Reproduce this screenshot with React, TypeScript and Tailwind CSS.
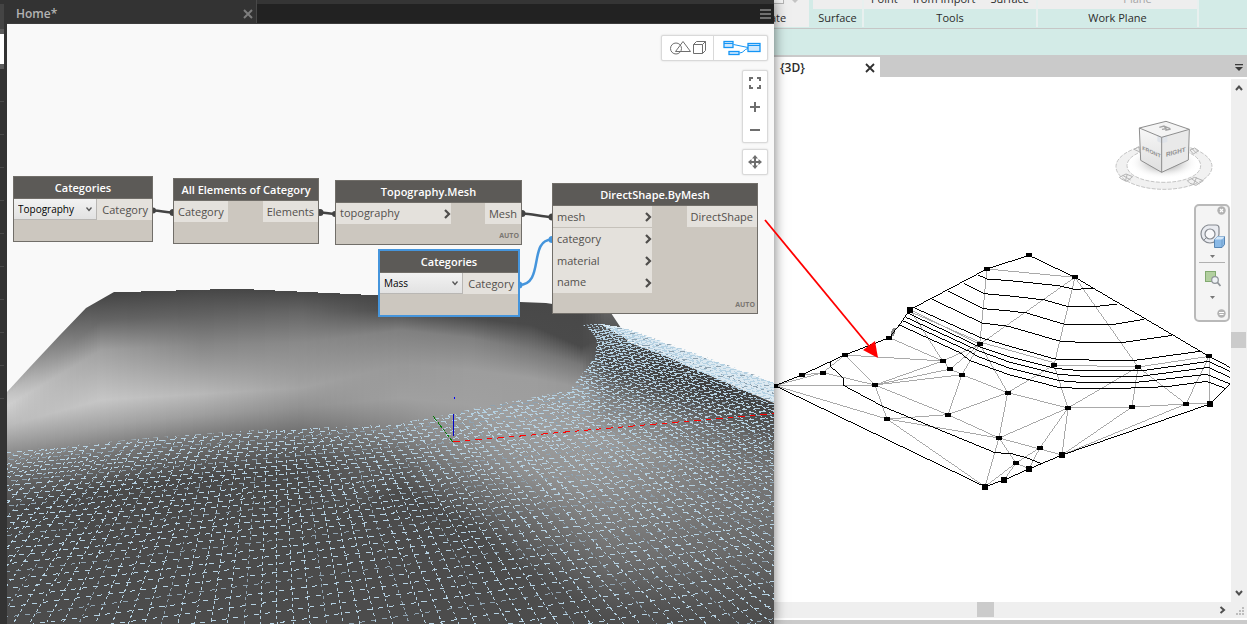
import React from "react";

type Point = [number, number];

const SANS = "font-['Open_Sans','Noto_Sans',sans-serif]";

/* ---------- Terrain preview ---------- */

type ShadeColumn = { x: number; stops: Point[] };

// Each column lists [y, grey level] pairs from the skyline down to the foreground.
const SHADES: ShadeColumn[] = [
  { x: 7, stops: [[385, 175], [395, 198], [405, 208], [425, 187], [450, 145], [475, 105], [510, 74], [560, 75], [624, 76]] },
  { x: 100, stops: [[295, 70], [320, 100], [350, 160], [400, 198], [425, 165], [450, 122], [490, 74], [550, 75], [624, 76]] },
  { x: 200, stops: [[289, 70], [315, 98], [345, 134], [394, 184], [415, 158], [440, 115], [478, 74], [550, 75], [624, 76]] },
  { x: 300, stops: [[290, 70], [312, 102], [343, 138], [388, 163], [407, 145], [432, 113], [468, 76], [550, 75], [624, 76]] },
  { x: 400, stops: [[296, 70], [310, 75], [330, 128], [365, 152], [398, 160], [425, 138], [455, 108], [490, 76], [624, 76]] },
  { x: 470, stops: [[300, 72], [318, 76], [338, 128], [370, 157], [405, 160], [450, 140], [487, 112], [530, 76], [624, 76]] },
  { x: 530, stops: [[302, 72], [325, 74], [350, 120], [378, 157], [425, 159], [475, 143], [520, 108], [575, 78], [624, 76]] },
  { x: 580, stops: [[302, 72], [347, 74], [365, 120], [388, 152], [435, 158], [480, 148], [540, 112], [600, 80], [624, 76]] },
  { x: 605, stops: [[310, 100], [335, 80], [362, 72], [400, 130], [440, 155], [480, 145], [550, 115], [605, 84], [624, 76]] },
  { x: 650, stops: [[350, 66], [372, 68], [390, 85], [415, 130], [450, 145], [490, 135], [560, 110], [610, 82], [624, 78]] },
  { x: 710, stops: [[375, 64], [392, 66], [405, 80], [430, 115], [460, 125], [500, 122], [560, 105], [605, 85], [624, 78]] },
  { x: 776, stops: [[403, 66], [410, 68], [420, 75], [445, 100], [475, 115], [515, 112], [560, 98], [600, 82], [624, 76]] },
];

const STRIP = 3;

function shadeAt(x: number): Point[] {
  let i = 0;
  while (i < SHADES.length - 2 && SHADES[i + 1].x < x) i++;
  const a = SHADES[i];
  const b = SHADES[i + 1];
  const t = Math.max(0, Math.min(1, (x - a.x) / (b.x - a.x)));
  return a.stops.map((s, n) => [
    s[0] + (b.stops[n][0] - s[0]) * t,
    s[1] + (b.stops[n][1] - s[1]) * t,
  ]);
}

const strips = Array.from({ length: 256 }, (_, i) => 7 + i * STRIP);

const TERRAIN =
  "7,392 30,367 60,335 86,308 114,292 141,292 141,291 176,291 176,290 210,290 210,289 254,289 254,290 275,290 275,291 297,291 297,292 318,292 318,293 340,293 340,294 361,294 361,295 380,295 520,302 546,303 611,313 621,328 628,342 663,355 713,377 774,403 774,624 7,624";

const GRID_REGION =
  "7,452 67,446 150,438 230,432 277,429 340,427 393,424 440,416 477,408 530,398 570,390 583,373 595,357 597,340 592,332 583,325 605,323 620,326 774,382 774,624 7,624";

const HORIZON = 210;
const VANISH_X = 275;
const FAR_X = 3104;

const depthLines = Array.from({ length: 128 }, (_, i) => i - 74).map((k) => {
  const slope = 0.763 + 0.0399 * k;
  return {
    major: (((k + 1) % 5) + 5) % 5 === 0,
    x1: VANISH_X + slope * 100,
    y1: HORIZON + 100,
    x2: VANISH_X + slope * 420,
    y2: HORIZON + 420,
  };
});

const crossLines = Array.from({ length: 92 }, (_, i) => i - 50)
  .map((j) => ({ j, inv: 1 / 232 - j * 0.000072 }))
  .filter((l) => l.inv > 0.0015)
  .map(({ j, inv }) => {
    const depth = 1 / inv;
    const at = (x: number) => HORIZON + (depth * (FAR_X - x)) / (FAR_X - 453);
    return { major: j % 5 === 0, y1: at(0), y2: at(780), shift: (Math.abs(j) * 7) % 11 };
  });

function TerrainScene() {
  return (
    <svg className="absolute inset-0 h-full w-full" viewBox="7 24 767 600" aria-hidden="true">
      <defs>
        <clipPath id="terrain">
          <polygon points={TERRAIN} />
        </clipPath>
        <clipPath id="grid-region">
          <polygon points={GRID_REGION} />
        </clipPath>
        {strips.map((x, i) => (
          <linearGradient key={x} id={`shade-${i}`} gradientUnits="userSpaceOnUse" x1="0" x2="0" y1="280" y2="624">
            {shadeAt(x).map(([y, v], n) => {
              const c = Math.round(v);
              return <stop key={n} offset={(y - 280) / 344} stopColor={`rgb(${c},${c},${c})`} />;
            })}
          </linearGradient>
        ))}
      </defs>
      <g clipPath="url(#terrain)" shapeRendering="crispEdges">
        {strips.map((x, i) => (
          <rect key={x} x={x} y="280" width={STRIP} height="344" fill={`url(#shade-${i})`} />
        ))}
      </g>
      <g clipPath="url(#grid-region)" shapeRendering="crispEdges" strokeWidth="1">
        <path d="M600 324L620 327L774 383V402L713 377L663 355L628 340Z" fill="#dce9f1" />
        {depthLines.map((l, i) => (
          <line key={i} x1={l.x1} y1={l.y1} x2={l.x2} y2={l.y2} stroke={l.major ? "#8ea2b0" : "#b5d1e2"} strokeDasharray="3 3" />
        ))}
        {crossLines.map((l, i) => (
          <line key={i} x1="0" y1={l.y1} x2="780" y2={l.y2} stroke={l.major ? "#8ea2b0" : "#b5d1e2"} strokeDasharray="5 6" strokeDashoffset={l.shift} />
        ))}
      </g>
      <g shapeRendering="crispEdges" fill="none">
        <path d="M453 442L774 413.500" stroke="#ff0000" strokeDasharray="7 5 5 5" />
        <path d="M433 416L453 442" stroke="#067a06" strokeDasharray="3 1" />
        <path d="M453.500 414V436" stroke="#0000c8" />
        <path d="M454.500 397V399" stroke="#0000ff" />
      </g>
    </svg>
  );
}

/* ---------- Graph nodes ---------- */

function Chevron() {
  return (
    <svg width="7" height="10" viewBox="0 0 7 10" aria-hidden="true">
      <path d="M1 1L5 5L1 9" fill="none" stroke="#4f4d4b" strokeWidth="2.200" />
    </svg>
  );
}

function InPort({ label, className = "", chevron = false }: { label: string; className?: string; chevron?: boolean }) {
  return (
    <div className={`flex items-center justify-between bg-[#e4e1dc] pl-1 ${className}`}>
      <span>{label}</span>
      {chevron && <Chevron />}
    </div>
  );
}

function OutPort({ label }: { label: string }) {
  return <div className="ml-auto flex h-[21px] items-center bg-[#e4e1dc] px-1 pt-px">{label}</div>;
}

function Node({
  title,
  place,
  selected = false,
  auto = false,
  children,
}: {
  title: string;
  place: string;
  selected?: boolean;
  auto?: boolean;
  children: React.ReactNode;
}) {
  return (
    <section
      className={`absolute flex flex-col bg-[#ccc7bf] text-[11px] text-[#53504d] ${
        selected ? "border-2 border-[#4595dc]" : "border border-[#716e69]"
      } ${place}`}
    >
      <h2 className="flex h-[22px] shrink-0 items-center justify-center border-b border-[#716e69] bg-[#5c5a57] pt-[2px] text-[11px] font-semibold text-white">
        {title}
      </h2>
      <div className="flex items-start">{children}</div>
      {auto && <span className="mt-auto pr-[2px] pb-[3px] text-right text-[7px] leading-[10px] font-bold text-[#7a7671]">AUTO</span>}
    </section>
  );
}

function CategorySelect({ value }: { value: string }) {
  return (
    <div className="relative h-[21px] w-[83px] border-r border-b border-[#b9b7b4] bg-gradient-to-b from-[#f2f2f2] to-[#e2e2e2]">
      <select
        aria-label="Category"
        defaultValue={value}
        className="block h-full w-full appearance-none bg-transparent pl-1 text-[10px] leading-[18px] text-black outline-none"
      >
        <option>{value}</option>
      </select>
      <svg className="pointer-events-none absolute top-2 right-1" width="6" height="5" viewBox="0 0 6 5" aria-hidden="true">
        <path d="M.5 .5L3 3.500L5.500 .5" fill="none" stroke="#555" strokeWidth="1.300" />
      </svg>
    </div>
  );
}

function Connectors() {
  return (
    <svg className="absolute inset-0 h-full w-full" viewBox="7 24 767 600" aria-hidden="true">
      <g fill="none" stroke="#434343" strokeWidth="2.500">
        <path d="M154 210.500C160 210.500 166 212.500 173 212.500" />
        <path d="M320 212.500C326 212.500 330 214 335 214" />
        <path d="M522 213.500C532 213.500 542 217 552 217" />
        <path d="M519 285C545 285 528 239.500 552 239.500" stroke="#4595dc" />
      </g>
      <g fill="#434343">
        <circle cx="153" cy="210.500" r="3" />
        <circle cx="173" cy="212.500" r="3.500" />
        <circle cx="320" cy="212.500" r="3.500" />
        <circle cx="335" cy="214" r="3" />
        <circle cx="522" cy="213.500" r="3.500" />
        <circle cx="552" cy="217" r="3.500" />
        <circle cx="519" cy="285" r="3.500" fill="#4595dc" />
        <circle cx="552" cy="239.500" r="3.500" fill="#4595dc" />
      </g>
    </svg>
  );
}

function Graph() {
  return (
    <>
      <Connectors />
      <Node title="Categories" place="top-[152px] left-[6px] h-[66px] w-[140px]">
        <CategorySelect value="Topography" />
        <div className="flex h-[21px] flex-1 items-center justify-end bg-[#e4e1dc] pt-px pr-1">Category</div>
      </Node>
      <Node title="All Elements of Category" place="top-[154px] left-[166px] h-[66px] w-[146px]">
        <InPort label="Category" className="h-[21px] w-[54px] pt-px" />
        <OutPort label="Elements" />
      </Node>
      <Node title="Topography.Mesh" place="top-[156px] left-[328px] h-[65px] w-[187px]" auto>
        <InPort label="topography" className="h-[21px] w-[115px]" chevron />
        <OutPort label="Mesh" />
      </Node>
      <Node title="Categories" place="top-[225px] left-[371px] h-[68px] w-[142px]" selected>
        <CategorySelect value="Mass" />
        <div className="flex h-[21px] flex-1 items-center justify-end bg-[#e4e1dc] pt-px pr-1">Category</div>
      </Node>
      <Node title="DirectShape.ByMesh" place="top-[159px] left-[545px] h-[131px] w-[206px]" auto>
        <div className="flex w-[99px] flex-col">
          <InPort label="mesh" className="h-[22px] border-b border-[#c5c1ba] pt-px" chevron />
          <InPort label="category" className="h-[22px]" chevron />
          <InPort label="material" className="h-[22px]" chevron />
          <InPort label="name" className="h-[21px]" chevron />
        </div>
        <OutPort label="DirectShape" />
      </Node>
    </>
  );
}

const CARD = "rounded-[2px] border border-[#d9d9d9] bg-white shadow-[0_0_2px_rgba(0,0,0,0.15)]";

function ViewControls() {
  return (
    <div className="absolute top-[11px] right-[6px] flex flex-col items-end">
      <div className={`flex h-[26px] w-[107px] ${CARD}`}>
        <button aria-label="3D preview" className="flex flex-1 items-center justify-center border-r border-[#d9d9d9]">
          <svg width="38" height="16" viewBox="0 0 38 16" fill="none" stroke="#6e6e6e">
            <circle cx="7" cy="8.500" r="5.500" />
            <path d="M14 1.500L21.500 11.500H6.500Z" />
            <path d="M24.500 4.500H33.500V13.500H24.500ZM24.500 4.500L27.500 1.500H36.500V10.500L33.500 13.500M33.500 4.500L36.500 1.500" />
          </svg>
        </button>
        <button aria-label="Graph view" className="flex flex-1 items-center justify-center pl-[2px]">
          <svg width="38" height="16" viewBox="0 0 38 16" fill="none" stroke="#1495f5">
            <path d="M10.500 4.500L25 7.500M16.500 13C21 13 21 9 25 8.500" />
            <rect x="1" y="1.500" width="9" height="6" fill="#cfe8fd" strokeWidth="1.300" />
            <rect x="25" y="3.500" width="12" height="8" fill="#cfe8fd" strokeWidth="1.300" />
            <rect x="6" y="11.500" width="10" height="3" fill="#cfe8fd" strokeWidth="1.300" />
            <path d="M1 3.500H10M25 5.500H37" strokeWidth="1" />
          </svg>
        </button>
      </div>
      <div className={`mt-[9px] flex h-[73px] w-[26px] flex-col ${CARD}`}>
        <button aria-label="Fit to screen" className="flex flex-1 items-center justify-center">
          <svg width="12" height="12" viewBox="0 0 12 12" fill="none" stroke="#6e6e6e" strokeWidth="2">
            <path d="M1 4V1H4M8 1H11V4M11 8V11H8M4 11H1V8" />
          </svg>
        </button>
        <button aria-label="Zoom in" className="flex flex-1 items-center justify-center">
          <svg width="10" height="10" viewBox="0 0 10 10" stroke="#6e6e6e" strokeWidth="2">
            <path d="M0 5H10M5 0V10" />
          </svg>
        </button>
        <button aria-label="Zoom out" className="flex flex-1 items-center justify-center">
          <svg width="10" height="10" viewBox="0 0 10 10" stroke="#6e6e6e" strokeWidth="2">
            <path d="M0 5H10" />
          </svg>
        </button>
      </div>
      <button aria-label="Pan" className={`mt-[6px] flex h-[26px] w-[26px] items-center justify-center ${CARD}`}>
        <svg width="14" height="14" viewBox="0 0 14 14">
          <path d="M2 7H12M7 2V12" stroke="#6e6e6e" strokeWidth="2" />
          <path d="M7 0L10 3.500H4ZM7 14L10 10.500H4ZM0 7L3.500 4V10ZM14 7L10.500 4V10Z" fill="#6e6e6e" />
        </svg>
      </button>
    </div>
  );
}

function LibraryStrip() {
  return (
    <div className="flex w-[7px] shrink-0 flex-col bg-[#333333] pt-1 pr-[3px]">
      <div className="h-[25px] shrink-0 bg-[#444444]" />
      <div className="h-10 shrink-0 border-y-[5px] border-[#5c5c5c] bg-white" />
      {Array.from({ length: 10 }, (_, i) => (
        <div key={i} className="h-[33px] shrink-0 border-b border-[#4a4a4a]" />
      ))}
    </div>
  );
}

function GraphWindow() {
  return (
    <div className="relative z-10 flex min-w-0 flex-[774_1_0%] bg-[#333333] shadow-[0_0_12px_rgba(0,0,0,0.55)]">
      <LibraryStrip />
      <div className="flex min-w-0 flex-1 flex-col">
        <header className="flex h-6 shrink-0 items-stretch border-b border-[#3c3c3c] bg-[#222222]">
          <div className="flex w-[250px] items-center justify-between border-r border-[#484848] bg-[#333333] pt-[5px] pr-[3px] pl-[9px]">
            <span className="text-[12px] leading-4 font-semibold text-[#b4b4b4]">Home*</span>
            <button aria-label="Close Home" className="flex">
              <svg width="10" height="10" viewBox="0 0 10 10" stroke="#7d7d7d" strokeWidth="2">
                <path d="M1 1L9 9M9 1L1 9" />
              </svg>
            </button>
          </div>
          <div className="flex flex-1 items-center justify-end border-t-[4px] border-[#353535] pr-[3px]">
            <button aria-label="Menu" className="flex">
              <svg width="11" height="10" viewBox="0 0 11 10" stroke="#6f6f6f" strokeWidth="2">
                <path d="M0 1H11M0 5H11M0 9H11" />
              </svg>
            </button>
          </div>
        </header>
        <main className="relative flex-1 overflow-hidden bg-[#f9f9f9]">
          <TerrainScene />
          <Graph />
          <ViewControls />
        </main>
      </div>
    </div>
  );
}

/* ---------- 3D view window ---------- */

// Vertices of the triangulated surface, on a grid three times finer than the page.
const V: Record<string, Point> = {
  A: [15, 437], b: [95, 405], c: [159, 398], d: [224, 345], e: [358, 293], f: [420, 209], g: [651, 87], h: [777, 46],
  i: [915, 112], j: [1317, 349], k: [1320, 492], l: [876, 645], m: [777, 687], n: [702, 720], o: [645, 740], p: [315, 435],
  q: [351, 537], r: [518, 363], s: [541, 387], t: [576, 404], u: [534, 524], v: [629, 313], w: [713, 458], x: [687, 594],
  y: [852, 375], z: [1104, 381], B: [894, 504], C: [1086, 501], D: [1248, 492], E: [810, 623], F: [738, 669],
};

const EDGES =
  "Ap Aq Ac bc cd cp dp dr er fr fv gv gi vi pr ps pt pq pu qu qx qo tu tw ux wx xo xl xB xF vr vs vt vw rs st wy wB yi iz yz zj yB zB zC zD jD jk BC CD Dk Cl Dl Bl BE EF Em Fm Fo Fn uw".split(" ");

const CONTOURS = [
  "182,365 183,380 220,415 222,437 340,500 675,638 725,641 775,655 812,670",
  "625,105 650,117 720,122 865,137 915,148 970,145",
  "582,130 642,161 720,168 825,180 890,199 995,198 1040,192",
  "533,153 640,206 720,213 770,219 880,252 1025,254 1122,238",
  "487,178 636,249 715,259 868,303 930,307 1060,307 1207,286",
  "432,203 632,293 720,319 855,357 990,361 1095,361 1290,334",
  "415,220 627,320 720,351 855,385 930,392 1110,393 1317,364 1380,395",
  "408,232 625,332 720,367 860,402 940,409 1110,409 1317,382 1380,413",
  "400,243 600,335 620,348 720,385 870,422 940,428 1110,426 1310,403 1380,432",
  "388,255 570,338 600,362 720,405 870,443 940,445 1090,444 1190,440 1310,424 1368,446",
];

const OUTER = ["f", "k", "l", "m", "n", "o"];

function SurfaceScene() {
  return (
    <svg className="absolute inset-0 h-full w-full" viewBox="774 77 457 525" aria-hidden="true">
      <defs>
        <radialGradient id="cube-shadow">
          <stop offset="0.3" stopColor="#b5b5b5" />
          <stop offset="1" stopColor="#ffffff" stopOpacity="0" />
        </radialGradient>
        <linearGradient id="cube-front" x1="0" y1="0" x2="0" y2="1">
          <stop offset="0" stopColor="#f7f7f7" />
          <stop offset="1" stopColor="#dedede" />
        </linearGradient>
      </defs>
      <g transform="translate(770 240) scale(0.333333)" fill="none" strokeWidth="3" shapeRendering="crispEdges">
        <path d="M372 290L362 283L366 266L378 264Z" fill="#888" />
        <path d="M420 215L629 306L852 368" stroke="#a9a9a9" />
        {EDGES.map((e) => (
          <line key={e} x1={V[e[0]][0]} y1={V[e[0]][1]} x2={V[e[1]][0]} y2={V[e[1]][1]} stroke="#a9a9a9" />
        ))}
        {CONTOURS.map((c) => (
          <polyline key={c} points={c} stroke="#000" />
        ))}
        <path
          d="M1380 382L1317 349L915 112L777 46L651 87L420 209L388 255L358 293L224 345L95 405L15 437L645 740L702 720L777 687L876 645L1320 492L1380 432"
          stroke="#000"
        />
        {Object.entries(V).map(([name, [x, y]]) => {
          const tall = OUTER.includes(name);
          return <rect key={name} x={x - 9} y={tall ? y - 8 : y - 6} width="18" height={tall ? 17 : 12} fill="#000" />;
        })}
      </g>
      <g transform="translate(1090 80) scale(0.333333)">
        <path
          fillRule="evenodd"
          d="M222 192C300 192 366 222 366 260C366 298 300 328 222 328C144 328 78 298 78 260C78 222 144 192 222 192ZM222 204C160 204 111 228 111 257C111 286 160 307 222 307C284 307 332 286 332 257C332 228 284 204 222 204Z"
          fill="#f1f1f1"
          stroke="#c4c4c4"
          strokeWidth="3"
          strokeDasharray="12 4"
        />
        <ellipse cx="222" cy="248" rx="104" ry="48" fill="url(#cube-shadow)" />
        <path d="M148 144L215 172V277L152 241Z" fill="url(#cube-front)" />
        <path d="M215 172L298 148L295 240L215 277Z" fill="#e9e9e9" />
        <path d="M148 144L228 124L298 148L215 172Z" fill="#f4f4f4" />
        <path d="M202 165L215 170L232 165V186L215 190L202 184Z" fill="#dfe3e9" />
        <path
          d="M148 144L228 124L298 148L215 172ZM148 144L152 241L215 277L295 240L298 148M215 172V277"
          fill="none"
          stroke="#8e8e8e"
          strokeWidth="3"
          strokeLinejoin="round"
        />
        <g fontFamily="Liberation Sans, sans-serif" fontWeight="bold" fill="#8f8f8f">
          <text transform="translate(157 209) skewY(24)" fontSize="16">
            FRONT
          </text>
          <text transform="translate(228 230) skewY(-15)" fontSize="19">
            RIGHT
          </text>
        </g>
        <path d="M208 142L222 138L228 146L216 148M222 138L240 146M226 151L242 147" fill="none" stroke="#a3a3a3" strokeWidth="4" />
        <g fill="none" stroke="#b4b4b4" strokeWidth="3">
          <path d="M88 292L108 282L128 290L110 304L96 298ZM98 286L122 300M112 282L106 304" />
          <path d="M292 302L314 292L340 302L318 316L300 310ZM304 296L328 312M320 292L310 314" />
          <path d="M132 208L146 200L150 216Z" />
          <path d="M300 210L314 204L326 212L310 222ZM306 206L320 220" />
        </g>
      </g>
    </svg>
  );
}

function NavigationBar() {
  return (
    <div className="absolute top-[127px] right-px flex h-[118px] w-[36px] flex-col items-center rounded-[5px] border-2 border-[#b9b9b9] bg-[#f4f4f4]">
      <button aria-label="Close bar" className="mr-[2px] flex self-end">
        <svg width="9" height="9" viewBox="0 0 9 9">
          <circle cx="4.500" cy="4.500" r="4.200" fill="#b2b2b2" />
          <path d="M3 3L6 6M6 3L3 6" stroke="#fff" strokeWidth="1.200" />
        </svg>
      </button>
      <button aria-label="Steering wheel" className="mt-[9px] flex">
        <svg width="25" height="25" viewBox="0 0 25 25">
          <path d="M8 1H16Q19 1 19 4V10A9 9 0 1 1 1 10A9 9 0 0 1 8 1Z" fill="#e9ebf0" stroke="#858990" strokeWidth="1.200" />
          <circle cx="10" cy="10" r="5" fill="#f8f8fa" stroke="#858990" strokeWidth="1.200" />
          <path d="M4 16L6.500 13.500" stroke="#858990" />
          <path d="M14.500 15.500L17.500 12.500H24.500V20.500L22 23.500H14.500Z" fill="#8ab9e6" stroke="#5785b3" />
          <path d="M14.500 15.500H22L24.500 12.500H17.500Z" fill="#d4e8fa" />
          <path d="M22 15.500V23" stroke="#6e9ecb" />
        </svg>
      </button>
      <button aria-label="Steering wheel options" className="mt-[6px] flex">
        <svg width="5" height="3" viewBox="0 0 5 3"><path d="M0 0H5L2.500 3Z" fill="#777" /></svg>
      </button>
      <div className="mt-1 h-px w-[26px] bg-[#b0b0b0]" />
      <button aria-label="Zoom region" className="mt-[7px] flex">
        <svg width="17" height="17" viewBox="0 0 17 17">
          <rect x="1.500" y="1.500" width="10" height="10" fill="#b2cf9f" stroke="#82aa70" />
          <circle cx="11" cy="10" r="3.300" fill="#eef2f5" stroke="#8f9499" strokeWidth="1.200" />
          <path d="M13.500 12.500L16.500 16" stroke="#8f9499" strokeWidth="1.800" />
        </svg>
      </button>
      <button aria-label="Zoom options" className="mt-[9px] flex">
        <svg width="5" height="3" viewBox="0 0 5 3"><path d="M0 0H5L2.500 3Z" fill="#777" /></svg>
      </button>
      <button aria-label="Bar settings" className="mt-auto mr-[2px] mb-[2px] flex self-end">
        <svg width="9" height="9" viewBox="0 0 9 9">
          <circle cx="4.500" cy="4.500" r="4.200" fill="#b2b2b2" />
          <path d="M2 3.500H7M2.500 5.500H6.500" stroke="#fff" />
        </svg>
      </button>
    </div>
  );
}

function RibbonPanel({ label, tools, className }: { label: string; tools?: React.ReactNode; className: string }) {
  return (
    <section className={`flex flex-col border-r-2 border-[#e8f0ef] ${className}`}>
      <div className="flex h-[9px] items-end justify-center gap-[15px] overflow-hidden bg-[#eeeeee] pb-1 text-[11px] leading-3 whitespace-nowrap">
        {tools}
      </div>
      <h3 className="flex flex-1 items-center justify-center text-[11px] font-normal">{label}</h3>
    </section>
  );
}

function ScrollArrow({ path, label, className }: { path: string; label: string; className: string }) {
  return (
    <button aria-label={label} className={`flex shrink-0 items-center justify-center ${className}`}>
      <svg width="8" height="8" viewBox="0 0 8 8" fill="none" stroke="#505050" strokeWidth="2">
        <path d={path} />
      </svg>
    </button>
  );
}

function ModelWindow() {
  return (
    <div className="flex min-w-0 flex-[473_1_0%] flex-col bg-white text-[#2b2b2b]">
      <div className="flex h-[29px] shrink-0 overflow-hidden border-b border-[#c6c6c6] bg-[#d3ebe7] pb-px">
        <div className="relative mr-1 flex w-[35px] items-end bg-[#efefef] pb-px text-[11px]">
          <span className="-ml-1">ate</span>
          <span className="absolute top-0 left-0 h-1 w-[10px] border-r border-b border-[#b5b5b5] bg-[#f7f7f7]" />
          <svg className="absolute top-0 left-[18px]" width="6" height="3" viewBox="0 0 6 3" aria-hidden="true">
            <path d="M0 0H6L3 3Z" fill="#c4c4c4" />
          </svg>
        </div>
        <RibbonPanel label="Surface" className="w-[51px]" />
        <RibbonPanel
          label="Tools"
          className="w-[174px]"
          tools={
            <>
              <span>Point</span>
              <span>from Import</span>
              <span>Surface</span>
            </>
          }
        />
        <RibbonPanel label="Work Plane" className="w-[161px]" tools={<span className="pl-10 text-[#a5a5a5]">Plane</span>} />
      </div>
      <div className="h-[26px] shrink-0 bg-[#d3ebe7]" />
      <div className="flex h-[22px] shrink-0 items-stretch bg-[#cacaca] pt-[2px]">
        <div className="flex w-[106px] items-center justify-between bg-white pt-px pr-[5px] pl-[6px]">
          <span className="text-[12px] leading-4 font-semibold">{"{3D}"}</span>
          <button aria-label="Close view" className="flex">
            <svg width="10" height="10" viewBox="0 0 10 10" stroke="#2f2f2f" strokeWidth="1.800">
              <path d="M1 1L9 9M9 1L1 9" />
            </svg>
          </button>
        </div>
        <button aria-label="Switch views" className="ml-auto flex items-center pr-[4px]">
          <svg width="8" height="7" viewBox="0 0 8 7" fill="#3a3a3a">
            <path d="M0 0H8V1.200H0ZM0 3H8L4 7Z" />
          </svg>
        </button>
      </div>
      <div className="flex min-h-0 flex-1">
        <div className="relative min-w-0 flex-1 overflow-hidden bg-white">
          <SurfaceScene />
          <NavigationBar />
        </div>
        <div className="mt-[2px] flex w-4 shrink-0 flex-col bg-[#efefef]">
          <ScrollArrow label="Scroll up" className="h-[18px]" path="M1 6L4 2.500L7 6" />
          <div className="flex-[235_1_0%]" />
          <div className="h-4 w-[15px] shrink-0 bg-[#cbcbcb]" />
          <div className="flex-[236_1_0%]" />
          <ScrollArrow label="Scroll down" className="h-[18px]" path="M1 2L4 5.500L7 2" />
        </div>
      </div>
      <div className="flex h-4 shrink-0 bg-[#efefef]">
        <div className="flex-[203_1_0%]" />
        <div className="h-[15px] w-[17px] shrink-0 bg-[#cbcbcb]" />
        <div className="flex-[219_1_0%]" />
        <ScrollArrow label="Scroll right" className="w-[18px]" path="M2.500 1L6 4L2.500 7" />
        <svg className="mt-[5px] ml-[5px] shrink-0" width="11" height="9" viewBox="0 0 11 9" fill="#bdbdbd" aria-hidden="true">
          <path d="M6 0H8V2H6ZM3 3H5V5H3ZM6 3H8V5H6ZM0 6H2V8H0ZM3 6H5V8H3ZM6 6H8V8H6Z" />
        </svg>
      </div>
      <div className="mt-[2px] h-1 shrink-0 bg-[#cacaca]" />
    </div>
  );
}

export default function App() {
  return (
    <div className={`relative flex h-screen overflow-hidden ${SANS}`}>
      <GraphWindow />
      <ModelWindow />
      <svg className="pointer-events-none absolute inset-0 z-20 h-full w-full" viewBox="0 0 1247 624" aria-hidden="true">
        <path d="M765 220L869 346" stroke="#ff0000" strokeWidth="1.800" />
        <path d="M878 358L863 350L875 341Z" fill="#ff0000" />
      </svg>
    </div>
  );
}
